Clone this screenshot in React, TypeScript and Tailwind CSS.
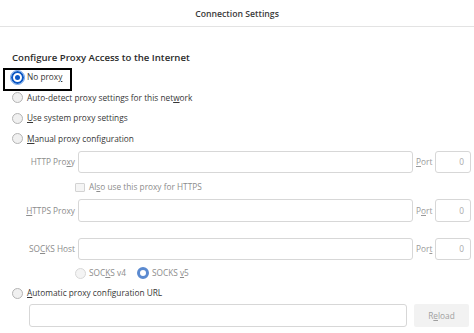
import React from "react";

function U({ children }: { children: React.ReactNode }) {
  return <span className="underline underline-offset-[1px]">{children}</span>;
}

function Radio({ checked = false, disabled = false }: { checked?: boolean; disabled?: boolean }) {
  if (checked && !disabled) {
    return (
      <span className="flex h-[13px] w-[13px] shrink-0 items-center justify-center rounded-full border-[2px] border-[#0b57c4] bg-white outline outline-[1.5px] outline-[#6aa0e6]">
        <span className="h-[5px] w-[5px] rounded-full bg-[#0b57c4]" />
      </span>
    );
  }
  if (checked && disabled) {
    return (
      <span className="flex h-[12px] w-[12px] shrink-0 items-center justify-center rounded-full border-[3px] border-[#5b8ad0] bg-white" />
    );
  }
  return (
    <span
      className={
        "h-[11px] w-[11px] shrink-0 rounded-full border " +
        (disabled ? "border-[#d8d8d8] bg-[#f4f4f4]" : "border-[#b4b4b4] bg-[#f0f0f0]")
      }
    />
  );
}

function TextInput({ className }: { className: string }) {
  return <div className={"h-full rounded-[3px] border border-[#d7d7d7] bg-white " + className} />;
}

function ProxyRow({ label, port, className }: { label: React.ReactNode; port: React.ReactNode; className: string }) {
  return (
    <div className={"flex items-center " + className}>
      <div className="w-[75px] shrink-0 text-right text-[#8c8c8c]">{label}</div>
      <div className="ml-[3px] h-full w-[335px]">
        <TextInput className="w-full" />
      </div>
      <div className="ml-[3px] w-[19px] text-[#9a9a9a]">{port}</div>
      <div className="flex h-full w-[36px] items-center justify-end rounded-[3px] border border-[#d7d7d7] pr-[6px] text-[#aaaaaa]">
        0
      </div>
    </div>
  );
}

export default function App() {
  return (
    <div className="h-[333px] w-[474px] overflow-hidden bg-white font-['Open_Sans','Noto_Sans',sans-serif] text-[8.3px] leading-[12px] text-[#363636]">
      <div className="flex h-[27px] items-center justify-center border-b border-[#e3e3e3] pt-[1px] text-[8.7px] font-semibold text-[#3a3a3a]">
        Connection Settings
      </div>

      <div className="mt-[24px] h-[14px] pl-[12px] text-[9.6px] font-semibold leading-[14px] text-[#2b2b2b]">
        Configure Proxy Access to the Internet
      </div>

      <div className="relative mt-[2px] flex h-[20.5px] items-center">
        <div className="flex w-[27px] justify-center pl-[7px]">
          <Radio checked />
        </div>
        <span>
          No prox<U>y</U>
        </span>
        <div className="absolute left-[3px] top-[1px] h-[23px] w-[69px] border-2 border-black" />
      </div>
      <div className="flex h-[20.5px] items-center">
        <div className="flex w-[27px] justify-center pl-[7px]">
          <Radio />
        </div>
        <span>
          Auto-detect proxy settings for this net<U>w</U>ork
        </span>
      </div>
      <div className="flex h-[20.5px] items-center">
        <div className="flex w-[27px] justify-center pl-[7px]">
          <Radio />
        </div>
        <span>
          <U>U</U>se system proxy settings
        </span>
      </div>
      <div className="flex h-[20.5px] items-center">
        <div className="flex w-[27px] justify-center pl-[7px]">
          <Radio />
        </div>
        <span>
          <U>M</U>anual proxy configuration
        </span>
      </div>

      <ProxyRow
        className="mt-[2px] h-[22px]"
        label={
          <>
            HTTP Pro<U>x</U>y
          </>
        }
        port={
          <>
            <U>P</U>ort
          </>
        }
      />

      <div className="mt-[4px] flex h-[20px] items-center pl-[75px] text-[#8c8c8c]">
        <span className="h-[9px] w-[10px] shrink-0 rounded-[1px] border border-[#d3d3d3] bg-[#f5f5f5]" />
        <span className="ml-[4px]">
          Al<U>s</U>o use this proxy for HTTPS
        </span>
      </div>

      <ProxyRow
        className="mt-[2px] h-[23px]"
        label={
          <>
            <U>H</U>TTPS Proxy
          </>
        }
        port={
          <>
            P<U>o</U>rt
          </>
        }
      />

      <ProxyRow
        className="mt-[16px] h-[22px]"
        label={
          <>
            SO<U>C</U>KS Host
          </>
        }
        port={
          <>
            Por<U>t</U>
          </>
        }
      />

      <div className="mt-[3px] flex h-[20px] items-center pl-[75px] text-[#8c8c8c]">
        <Radio disabled />
        <span className="ml-[3px]">
          SOC<U>K</U>S v4
        </span>
        <span className="ml-[11px]">
          <Radio checked disabled />
        </span>
        <span className="ml-[3px]">
          SOCKS <U>v</U>5
        </span>
      </div>

      <div className="flex h-[20px] items-center">
        <div className="flex w-[27px] justify-center pl-[7px]">
          <Radio />
        </div>
        <span>
          <U>A</U>utomatic proxy configuration URL
        </span>
      </div>

      <div className="mt-[1px] flex h-[23px] items-center">
        <div className="ml-[29px] h-full w-[378px]">
          <TextInput className="w-full" />
        </div>
        <div className="ml-[7px] flex h-full w-[55px] items-center justify-center rounded-[2px] bg-[#f2f2f2] text-[#a0a0a0]">
          R<U>e</U>load
        </div>
      </div>
    </div>
  );
}
